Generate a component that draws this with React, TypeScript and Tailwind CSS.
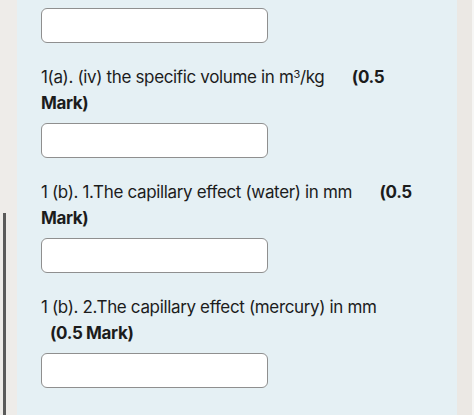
function AnswerBox() {
  return <div className="h-[35px] w-[227px] rounded-[6px] border-[1.5px] border-[#8f8f8f] bg-white" />
}

function Marks({ className = '' }: { className?: string }) {
  return <span className={`font-bold ${className}`}>(0.5 Mark)</span>
}

export default function App() {
  return (
    <div
      className="flex h-[415px] w-[474px] overflow-hidden bg-[#eeece9] text-[17px] leading-[26px] tracking-[-0.35px] text-[#1c1c1c]"
      style={{ fontFamily: 'Inter, "Noto Sans", sans-serif' }}
    >
      {/* left gutter with scroll thumb */}
      <div className="relative w-[17px] shrink-0 bg-[#eeece9]">
        <div className="absolute left-[3px] top-[213px] h-[202px] w-[2.5px] bg-[#5a5a5a]" />
      </div>

      <div className="flex w-[440px] shrink-0 flex-col bg-[#e5f0f4] pl-[24px] pr-[30px] pt-[8px]">
        <AnswerBox />

        <p className="mb-[7px] mt-[21px]">
          1(a). (iv) the specific volume in m<sup className="text-[11px]">3</sup>/kg{' '}
          <Marks className="ml-[23px]" />
        </p>
        <AnswerBox />

        <p className="mb-[7px] mt-[21px]">
          1 (b). 1.The capillary effect (water) in mm{' '}
          <Marks className="ml-[23px]" />
        </p>
        <AnswerBox />

        <div className="mb-[7px] mt-[21px]">
          <p>1 (b). 2.The capillary effect (mercury) in mm</p>
          <p className="pl-[9px]">
            <Marks />
          </p>
        </div>
        <AnswerBox />
      </div>

      <div className="w-[15px] shrink-0 bg-[#ebe8e4]" />
      <div className="w-[2px] shrink-0 bg-[#f6f6f5]" />
    </div>
  )
}
